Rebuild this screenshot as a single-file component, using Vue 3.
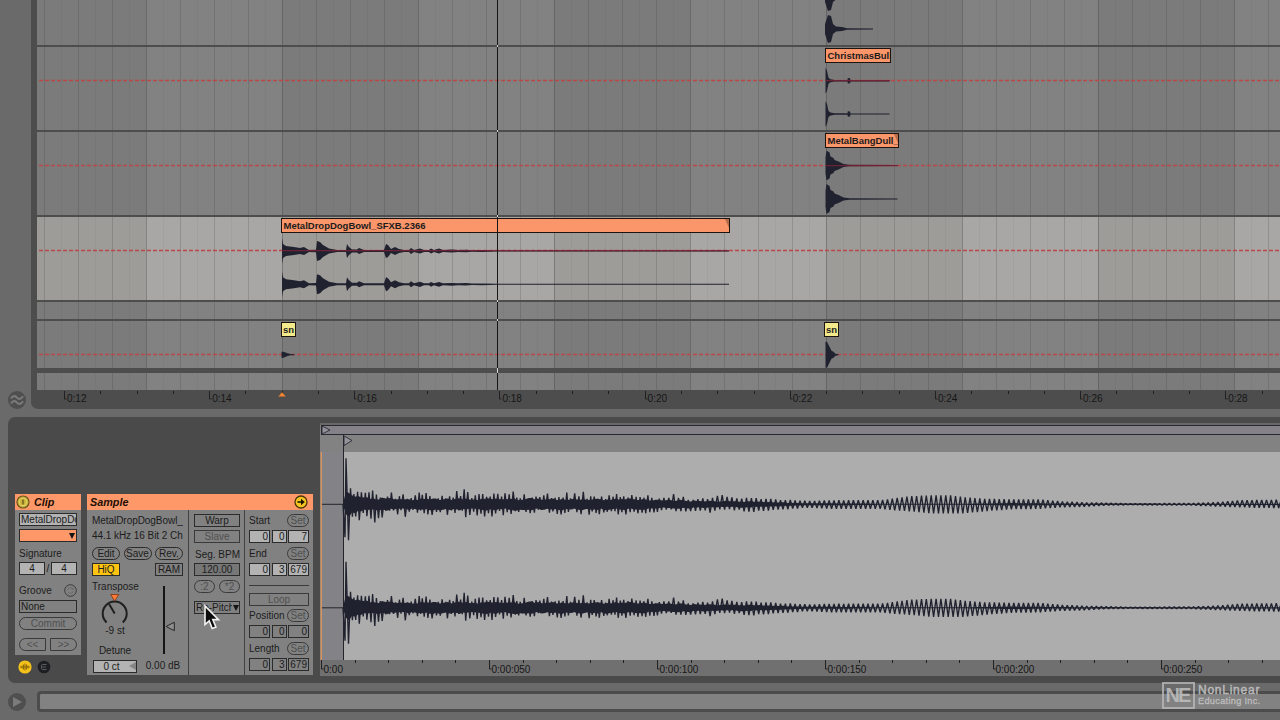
<template>
  <div class="live">
    <section class="arrangement">
      <div class="rail">
        <svg class="follow" width="18" height="18" viewBox="0 0 18 18">
          <circle cx="9" cy="9" r="9" />
          <path d="M3 7.5 C5.5 3.5 7.5 5 9 6.7 S12.5 9 15 5.2 M3 12.5 C5.5 8.5 7.5 10 9 11.7 S12.5 14 15 10.2" />
        </svg>
      </div>
      <div class="timeline">
        <div class="lanes">
          <div class="lane lane-top"></div>
          <div class="lane lane-tall"></div>
          <div class="lane lane-tall"></div>
          <div class="lane lane-tall selected"></div>
          <div class="lane lane-thin"></div>
          <div class="lane lane-short"></div>
          <div class="lane lane-master"></div>

          <svg class="waves" width="1243" height="390" viewBox="37 0 1243 390">
            <line v-for="y in automation" :key="y" class="auto" x1="39" :y1="y" x2="1280" :y2="y" />
            <path v-for="(w, i) in clipWaves" :key="i" class="wave" :d="envelope(w)" />
            <path class="auto-on" d="M282 250.7H729 M826 80.7H890 M826 165.7H898" />
          </svg>

          <div
            v-for="clip in clips"
            :key="clip.x + '-' + clip.y"
            class="clip"
            :class="clip.kind"
            :style="{ left: clip.x - 37 + 'px', top: clip.y + 'px', width: clip.w + 'px' }"
          >
            {{ clip.name }}
          </div>

          <svg class="waves" width="1243" height="390" viewBox="37 0 1243 390">
            <path class="playhead" d="M497.5 0V390" />
            <path class="playhead-gap" d="M497.5 45V47M497.5 130V132M497.5 215V217M497.5 300V302M497.5 319V321M497.5 368V373" />
          </svg>
        </div>
        <svg class="ruler" width="1243" height="19" viewBox="37 390 1243 19">
          <path class="tick" :d="arrangeTicks" />
          <path class="marker" d="M278.3 396.5L282 392.2L285.8 396.5Z" />
          <text v-for="(t, i) in arrangeLabels" :key="t" :x="67 + i * 145.15" y="402">{{ t }}</text>
        </svg>
      </div>
    </section>

    <section class="detail">
      <div class="clip-view">
        <div class="boxes">
          <div class="clip-col">
            <div class="box clip-box">
              <header class="head">
                <svg width="14" height="14" viewBox="0 0 14 14">
                  <circle cx="7" cy="7" r="6" fill="#c9b23c" stroke="#6a561c" stroke-width="1.2" />
                  <circle cx="7" cy="7" r="3.8" fill="none" stroke="#e8d565" />
                  <path d="M7 4.5V9.5" stroke="#7c6821" stroke-width="1.6" />
                </svg>
                <span class="title">Clip</span>
              </header>
              <div class="clip-body">
                <div class="field lit name">MetalDropDogBowl</div>
                <div class="field color-pick"><i class="caret"></i></div>
                <div class="text sig-label">Signature</div>
                <div class="line sig">
                  <div class="field lit num">4</div>
                  <span>/</span>
                  <div class="field lit num">4</div>
                </div>
                <div class="line groove">
                  <span>Groove</span>
                  <svg width="13" height="13" viewBox="0 0 13 13">
                    <circle cx="6.5" cy="6.5" r="5.8" fill="none" stroke="#3b3b3b" />
                    <path d="M3.5 6.2A3 3 0 0 1 9 5M9.5 6.8A3 3 0 0 1 4 8M9.2 3.4V5.3H7.2" fill="none" stroke="#6a6a6a" />
                  </svg>
                </div>
                <div class="field none">None</div>
                <div class="pill dim commit">Commit</div>
                <div class="line nudge">
                  <div class="pill dim half-l">&lt;&lt;</div>
                  <div class="pill dim half-r">&gt;&gt;</div>
                </div>
              </div>
            </div>
            <div class="toggles">
              <svg width="14" height="14" viewBox="0 0 14 14">
                <circle cx="7" cy="7" r="6.6" fill="#f5c21b" />
                <path d="M2 7H12M4 5.5V8.5M5.5 4.5V9.5M7 3.5V10.5M8.5 4.5V9.5M10 5.5V8.5" stroke="#8c6a08" />
              </svg>
              <svg width="14" height="14" viewBox="0 0 14 14">
                <circle cx="7" cy="7" r="6.3" fill="#1d1f22" />
                <path d="M9.5 4.5H5.5Q4.5 4.5 4.5 5.5V8.5Q4.5 9.5 5.5 9.5H9.5M5 7H9" fill="none" stroke="#5b5d61" />
              </svg>
            </div>
          </div>

          <div class="box sample-box">
            <header class="head sample-head">
              <span class="title">Sample</span>
              <svg width="14" height="14" viewBox="0 0 14 14">
                <circle cx="7" cy="7" r="6" fill="#f7c51e" stroke="#4c3708" stroke-width="1.3" />
                <path d="M3.5 7H9" stroke="#1c1405" stroke-width="1.6" />
                <path d="M7 3.8L10.8 7L7 10.2Z" fill="#1c1405" />
              </svg>
            </header>
            <div class="cols">
              <div class="col col-file">
                <div class="text file-name">MetalDropDogBowl_</div>
                <div class="text file-info">44.1 kHz 16 Bit 2 Ch</div>
                <div class="line gap4">
                  <div class="pill">Edit</div>
                  <div class="pill">Save</div>
                  <div class="pill">Rev.</div>
                </div>
                <div class="line gap3">
                  <div class="field hiq">HiQ</div>
                  <div class="field ram">RAM</div>
                </div>
                <div class="tune">
                  <div class="tune-left">
                    <div class="text">Transpose</div>
                    <svg class="knob" width="30" height="31" viewBox="100 593 30 31">
                      <path d="M106.6 622.4A12 12 0 1 1 122.8 622.4" fill="none" stroke="#1f1f1f" stroke-width="2" />
                      <path d="M114.7 613.5L109.2 604.3" stroke="#1f1f1f" stroke-width="2" />
                      <path d="M110.6 594.5H118.8L114.7 601Z" fill="#ff7a35" stroke="#7c3411" stroke-width=".8" />
                    </svg>
                    <div class="text mid">-9 st</div>
                    <div class="text mid detune">Detune</div>
                    <div class="field lit ct">0 ct<i></i></div>
                  </div>
                  <div class="tune-right">
                    <svg width="16" height="72" viewBox="161 583 16 72">
                      <path d="M164 586V654" stroke="#151515" stroke-width="2" />
                      <path d="M166 626.5L174.3 622.3V630.7Z" fill="#8f8f8f" stroke="#242424" />
                    </svg>
                    <div class="text db">0.00 dB</div>
                  </div>
                </div>
              </div>

              <div class="col col-warp">
                <div class="field">Warp</div>
                <div class="field dim gap3">Slave</div>
                <div class="text gap5">Seg. BPM</div>
                <div class="field bpm gap2">120.00</div>
                <div class="line gap4">
                  <div class="pill dim">:2</div>
                  <div class="pill dim">*2</div>
                </div>
                <div class="field mode"><span>Re-Pitch</span><i class="caret"></i></div>
              </div>

              <div class="col col-range">
                <template v-for="(r, i) in ranges" :key="r.label">
                  <div v-if="i === 2" class="rule"></div>
                  <div v-if="i === 2" class="field dim loop">Loop</div>
                  <div class="line" :class="{ gap4: i > 0 && i !== 2, gap3: i === 2 }">
                    <span>{{ r.label }}</span>
                    <div class="pill dim set">Set</div>
                  </div>
                  <div class="line values">
                    <div
                      v-for="(n, k) in r.values"
                      :key="k"
                      class="field value"
                      :class="{ lit: r.lit, mini: k === 1 }"
                    >{{ n }}</div>
                  </div>
                </template>
              </div>
            </div>
          </div>
        </div>

        <svg class="editor" width="960" height="253" viewBox="320 423 960 253">
          <rect x="320" y="423" width="960" height="253" fill="#828282" />
          <rect x="320" y="423" width="960" height="2" fill="#686868" />
          <rect x="321.5" y="425.5" width="970" height="9" fill="#848189" stroke="#292934" />
          <rect x="322" y="452" width="21" height="208" fill="#838286" />
          <rect x="344" y="452" width="936" height="208" fill="#adadad" />
          <rect x="320" y="660" width="960" height="16" fill="#707070" />
          <rect x="320.6" y="452" width="1.4" height="208" fill="#d8935f" />
          <path d="M343.5 435V660" stroke="#24242c" />
          <path d="M322 426L330 430L322 434Z M344 436L352 440.5L344 445.5Z" fill="#94929a" stroke="#292934" stroke-width=".9" />
          <g v-for="y in [504.3, 607.8]" :key="y" :transform="`translate(0 ${y})`">
            <path d="M322 0H344" stroke="#24242c" />
            <path class="wave" :d="corePath" />
            <path class="spikes" :d="spikePath" />
          </g>
          <path class="tick" :d="sampleTicks" />
          <text v-for="(t, i) in sampleLabels" :key="t" :x="323.5 + i * 168" y="673">{{ t }}</text>
        </svg>
      </div>
    </section>

    <footer class="status">
      <svg width="18" height="18" viewBox="0 0 18 18">
        <circle cx="9" cy="9" r="9" fill="#4f4f4f" />
        <path d="M5 4L14 9L5 14Z" fill="#7b7b7b" />
      </svg>
      <div class="status-bar"></div>
    </footer>

    <svg class="pointer" width="18" height="28" viewBox="0 0 18 28">
      <path d="M2 2V20.5L6.2 16.8L9.2 24.5L12.9 23L9.8 15.6H15.5Z" />
    </svg>

    <div class="brand">
      <div class="brand-mark">NE</div>
      <div class="brand-text">
        <b>NonLinear</b>
        <small>Educating Inc.</small>
      </div>
    </div>
  </div>
</template>

<script setup>
const automation = [80.5, 165.5, 250.5, 354.5]

const clips = [
  { x: 825, y: 48, w: 66, name: 'ChristmasBull', kind: 'orange' },
  { x: 825, y: 133, w: 74, name: 'MetalBangDull_', kind: 'orange folded' },
  { x: 281, y: 218, w: 449, name: 'MetalDropDogBowl_SFXB.2366', kind: 'orange folded' },
  { x: 281, y: 322, w: 15, name: 'sn', kind: 'yellow' },
  { x: 824, y: 322, w: 15, name: 'sn', kind: 'yellow' },
]

// [offset, half height] pairs along each clip
const bowl = [
  [0, 13], [1, 7], [4, 5], [12, 4], [18, 3], [22, 4], [27, 1], [34, 1.3], [35, 10], [38, 9], [41, 6], [47, 2.5],
  [55, 1], [64, 1], [65, 7], [67, 4], [70, 1.5], [75, 1.5], [77, 3], [82, 1], [92, 1], [102, 1], [104, 7], [106, 6],
  [109, 2], [113, 4], [117, 2], [122, 1], [127, 1], [129, 3], [132, 1], [138, 2.6], [142, 1], [147, 1], [149, 2.4],
  [152, 1], [157, 2.4], [161, 1], [170, 1.4], [176, 1], [184, 1.2], [190, 0.7], [200, 0.9], [215, 0.5], [447, 0.5],
]
const bulb = [[0, 13], [1.5, 10], [3, 3], [5, 1.5], [9, 0.7], [22, 0.7], [22.3, 2.8], [24.5, 2.5], [25, 0.6], [64, 0.6]]
const bang = [
  [0, 8], [1, 15], [4, 13], [5, 9], [8, 7.5], [9, 5.5], [13, 4], [18, 1.5], [24, 0.7], [72, 0.6],
]
const hit = [[0, 5], [1, 8], [3, 14], [6, 13], [8, 5], [11, 2.5], [17, 2], [22, 0.8], [48, 0.6]]

const clipWaves = [
  { x: 825, y: -3, pts: hit },
  { x: 825, y: 29, pts: hit },
  { x: 825.5, y: 80.8, pts: bulb },
  { x: 825.5, y: 114, pts: bulb },
  { x: 825.5, y: 165.5, pts: bang },
  { x: 825.5, y: 199, pts: bang },
  { x: 282, y: 251, pts: bowl },
  { x: 282, y: 284.3, pts: bowl },
  { x: 281.5, y: 354.7, pts: [[0, 3], [2, 3], [6, 1.4], [9, 0.6], [13, 0.5]] },
  { x: 825.5, y: 354.7, pts: [[0, 13], [1.5, 13], [4, 8], [6, 4], [8, 3], [10, 1], [13, 0.5]] },
]

function envelope({ x, y, pts }) {
  const top = pts.map(([dx, h]) => `${x + dx} ${y - h}`)
  const bottom = [...pts].reverse().map(([dx, h]) => `${x + dx} ${y + h}`)
  return `M${top.join('L')}L${bottom.join('L')}Z`
}

const arrangeLabels = ['0:12', '0:14', '0:16', '0:18', '0:20', '0:22', '0:24', '0:26', '0:28']
const sampleLabels = ['0:00', '0:00:050', '0:00:100', '0:00:150', '0:00:200', '0:00:250']

function ticks(start, step, every, count, y, long) {
  let d = ''
  for (let i = 0; i < count; i++) {
    const x = Math.round(start + i * step) + 0.5
    d += i % every === 0 ? `M${x} ${y}V${y + long}H${x + 2}` : `M${x} ${y}V${y + 3}`
  }
  return d
}
const arrangeTicks = ticks(64, 36.29, 4, 34, 391, 8)
const sampleTicks = ticks(321, 33.6, 5, 29, 660, 9)

// x, peak height, trough depth, solid core
const shape = [
  [343, 1, 1, 1], [346, 46, 36, 12], [348.5, 24, 36, 12], [351, 14, 17, 8], [353, 21, 14, 8], [358, 17, 20, 7],
  [363, 11, 13, 6], [368, 19, 14, 6], [372, 17, 22, 6], [378, 14, 14, 5.5], [392, 13, 14, 5], [410, 12, 12, 4.5],
  [440, 12, 11, 5], [464, 15, 13, 5], [490, 14, 13, 5], [512, 13, 13, 5], [530, 10, 10, 5], [574, 14, 11, 5],
  [600, 10, 10, 4.8], [630, 12, 11, 5], [650, 9, 11, 4.5], [660, 7, 7, 3.5], [675, 11, 8, 4], [690, 6, 7, 3.5],
  [708, 6, 9, 3], [722, 10, 6, 3], [740, 7, 7, 3], [760, 6, 8, 2.5], [775, 5, 6.5, 2], [790, 4.5, 5, 1.5],
  [805, 3.5, 3.5, 1], [830, 4, 4.5, 1], [860, 4, 4.5, 0.8], [880, 4, 4.5, 0.5], [895, 6, 6, 0.5], [910, 8, 7, 0.5],
  [930, 9, 9, 0.5], [950, 9, 9, 0.5], [965, 7, 9, 0.5], [985, 5.5, 7, 0.8], [1010, 5, 5, 1.2], [1040, 5, 4.5, 1],
  [1060, 3, 3, 0.7], [1080, 2, 2.5, 0.6], [1105, 1.4, 1.2, 0.7], [1130, 0.7, 0.7, 0.7], [1190, 1, 1, 0.6],
  [1215, 2, 2, 0.6], [1240, 4, 3, 0.6], [1260, 4.3, 3.5, 0.6], [1290, 4.6, 4, 0.6],
]

function at(x, k) {
  let i = 1
  while (i < shape.length - 1 && shape[i][0] < x) i++
  const a = shape[i - 1]
  const b = shape[i]
  const t = Math.min(1, Math.max(0, (x - a[0]) / (b[0] - a[0])))
  return a[k] + (b[k] - a[k]) * t
}

let seed = 11
function rand() {
  seed = (seed * 16807) % 2147483647
  return seed / 2147483647
}

function buildSpikes() {
  let d = 'M343 0L345 33L346 -46L348.5 36'
  let up = true
  let x = 350.5
  while (x < 1284) {
    const noisy = Math.max(0, Math.min(1, (850 - x) / 250))
    const f = 1 - noisy * 0.58 * rand()
    d += `L${x.toFixed(1)} ${(up ? -at(x, 1) * f : at(x, 2) * f).toFixed(1)}`
    up = !up
    x += x < 660 ? 1.5 + rand() * 0.8 : 2.43
  }
  return d
}
const spikePath = buildSpikes()

function buildCore() {
  const xs = []
  for (let x = 343; x <= 1283; x += 3) xs.push(x)
  const edge = (x) => at(x, 3) * (x < 790 ? 0.8 + rand() * 0.45 : 1)
  const top = xs.map((x) => `${x} ${-edge(x).toFixed(1)}`)
  const bottom = xs.reverse().map((x) => `${x} ${edge(x).toFixed(1)}`)
  return `M${top.join('L')}L${bottom.join('L')}Z`
}
const corePath = buildCore()

const ranges = [
  { label: 'Start', values: [0, 0, 7], lit: true },
  { label: 'End', values: [0, 3, 679], lit: true },
  { label: 'Position', values: [0, 0, 0], lit: false },
  { label: 'Length', values: [0, 3, 679], lit: false },
]
</script>

<style>
body {
  background: #6a6a6a;
  overflow: hidden;
}
</style>

<style scoped>
.live {
  position: relative;
  width: 1280px;
  height: 720px;
  overflow: hidden;
  display: flex;
  flex-direction: column;
  background: #6a6a6a;
  font-family: 'Liberation Sans', Arial, sans-serif;
  font-size: 10px;
  color: #1c1c1c;
  cursor: default;
}

svg {
  display: block;
  flex-shrink: 0;
}

/* arrangement */
.arrangement {
  display: flex;
  height: 409px;
}

.rail {
  width: 31px;
  display: flex;
  align-items: flex-end;
}

.follow {
  margin-left: 8px;
}

.follow circle {
  fill: #4f4f4f;
}

.follow path {
  fill: none;
  stroke: #7c7c7c;
  stroke-width: 2;
}

.timeline {
  flex: 1;
  padding-left: 6px;
  background: #4d4d4d;
  border-bottom-left-radius: 7px;
}

.lanes {
  position: relative;
  height: 390px;
  display: flex;
  flex-direction: column;
  overflow: hidden;
}

.lane {
  margin-bottom: 2px;
  flex-shrink: 0;
  background-color: #7b7b7b;
  background-image:
    repeating-linear-gradient(90deg, rgba(0, 0, 0, 0.08) 0 1px, transparent 1px 136px),
    repeating-linear-gradient(90deg, rgba(0, 0, 0, 0.08) 0 1px, transparent 1px 34px),
    repeating-linear-gradient(90deg, rgba(0, 0, 0, 0.04) 0 1px, transparent 1px 17px),
    repeating-linear-gradient(90deg, transparent 0 136px, rgba(255, 255, 255, 0.05) 136px 272px);
  background-size: 1632px 100%;
  background-position-x: -27px;
}

.lane-top {
  height: 45px;
}

.lane-tall {
  height: 83px;
}

.lane-thin {
  height: 17px;
}

.lane-short {
  height: 47px;
  margin-bottom: 5px;
}

.lane-master {
  height: 17px;
  margin-bottom: 0;
}

.selected {
  background-color: #9d9c98;
  background-image:
    repeating-linear-gradient(90deg, rgba(0, 0, 0, 0.1) 0 1px, transparent 1px 136px),
    repeating-linear-gradient(90deg, rgba(0, 0, 0, 0.1) 0 1px, transparent 1px 34px),
    repeating-linear-gradient(90deg, rgba(0, 0, 0, 0.04) 0 1px, transparent 1px 17px),
    repeating-linear-gradient(90deg, transparent 0 136px, #a8a7a5 136px 272px);
}

.waves {
  position: absolute;
  left: 0;
  top: 0;
}

.auto {
  stroke: #b94848;
  stroke-width: 1.4;
  stroke-dasharray: 4 2;
}

.auto-on {
  fill: none;
  stroke: #7e2338;
  stroke-width: 1;
}

.wave {
  fill: #20222f;
}

.spikes {
  fill: none;
  stroke: #20222f;
  stroke-width: 1.35;
  stroke-linejoin: bevel;
}

.playhead {
  stroke: #161616;
}

.playhead-gap {
  stroke: #d8d8d8;
}

.clip {
  position: absolute;
  box-sizing: border-box;
  height: 15px;
  padding-left: 1.5px;
  border: 1.5px solid #1d140f;
  overflow: hidden;
  white-space: nowrap;
  font-size: 9.5px;
  font-weight: bold;
  line-height: 13.5px;
}

.clip.orange {
  background: #fb966a;
}

.clip.folded::after {
  content: '';
  position: absolute;
  right: 0;
  top: 0;
  border-top: 9px solid #b56d4c;
  border-left: 4px solid transparent;
}

.clip.yellow {
  background: #f3ea8b;
  padding-left: 1px;
}

.tick {
  fill: none;
  stroke: #212121;
}

.ruler text,
.editor text {
  font-size: 10px;
  fill: #161616;
}

.marker {
  fill: #f58430;
}

/* detail view */
.detail {
  margin: 8px 0 0 8px;
  height: 266px;
  background: #4a4a4a;
  border-radius: 7px 0 0 7px;
}

.clip-view {
  display: flex;
  justify-content: space-between;
  padding: 6px 0 0 7px;
}

.boxes {
  display: flex;
  gap: 6px;
  padding-top: 71px;
}

.box {
  background: #818181;
}

.clip-box {
  width: 66px;
  height: 161px;
}

.head {
  height: 16px;
  display: flex;
  align-items: center;
  gap: 4px;
  padding-left: 1px;
  background: #ff9868;
}

.title {
  font-size: 10.8px;
  font-weight: bold;
  font-style: italic;
  color: #1d0e06;
}

.sample-head {
  justify-content: space-between;
  padding: 0 5px 0 3px;
}

.clip-body {
  padding: 3px 4px 0;
  display: flex;
  flex-direction: column;
}

.field,
.pill {
  box-sizing: border-box;
  height: 13px;
  border: 1px solid #2b2b2b;
  line-height: 11.5px;
  text-align: center;
  white-space: nowrap;
  overflow: hidden;
}

.pill {
  border-radius: 7px;
}

.lit {
  background: #b3b3b3;
}

.dim {
  color: #505050;
  border-color: #3a3a3a;
}

.text {
  height: 13px;
  line-height: 13px;
  white-space: nowrap;
}

.line {
  height: 13px;
  display: flex;
  justify-content: space-between;
  align-items: center;
}

.caret {
  border-top: 6px solid #141414;
  border-left: 3.5px solid transparent;
  border-right: 3.5px solid transparent;
}

.gap2 {
  margin-top: 2px;
}

.gap3 {
  margin-top: 3px;
}

.gap4 {
  margin-top: 4px;
}

.gap5 {
  margin-top: 5px;
}

.name {
  text-align: left;
  padding-left: 1px;
}

.color-pick {
  margin-top: 3px;
  display: flex;
  justify-content: flex-end;
  align-items: center;
  padding-right: 1px;
  background: #ff9868;
}

.sig-label {
  margin-top: 5px;
}

.sig {
  margin-top: 2px;
}

.num {
  width: 26px;
}

.groove {
  margin-top: 9px;
}

.none {
  margin-top: 3px;
  text-align: left;
  padding-left: 1px;
}

.commit {
  margin-top: 4px;
}

.nudge {
  margin-top: 8px;
}

.half-l,
.half-r {
  width: 27px;
}

.half-l {
  border-radius: 7px 0 0 7px;
}

.half-r {
  border-radius: 0 7px 7px 0;
}

.toggles {
  display: flex;
  gap: 5px;
  padding: 5px 0 0 3px;
}

.sample-box {
  width: 226px;
  height: 181px;
}

.cols {
  display: flex;
  height: 165px;
}

.col {
  box-sizing: border-box;
  padding-top: 4px;
  display: flex;
  flex-direction: column;
}

.col-file {
  width: 102px;
  padding-left: 5px;
  padding-right: 5px;
  border-right: 1px solid #404040;
}

.file-name,
.file-info {
  letter-spacing: -0.05px;
}

.file-info {
  height: 12px;
  margin-top: 3px;
  padding-bottom: 1px;
  line-height: 12px;
}

.col-file .pill,
.hiq,
.ram {
  width: 28px;
}

.hiq {
  background: #ffc312;
}

.tune {
  display: flex;
  justify-content: space-between;
  margin-top: 4px;
}

.tune-left {
  width: 46px;
}

.knob {
  margin-left: 8px;
}

.mid {
  text-align: center;
}

.detune {
  margin-top: 7px;
}

.ct {
  position: relative;
  width: 44px;
  margin: 3px 0 0 1px;
  padding-right: 7px;
}

.ct i {
  position: absolute;
  right: 0;
  top: 1px;
  border-right: 7px solid #858585;
  border-top: 4.5px solid transparent;
  border-bottom: 4.5px solid transparent;
}

.tune-right {
  width: 40px;
  display: flex;
  flex-direction: column;
  align-items: center;
  padding-top: 3px;
}

.tune-right svg {
  margin-left: 12px;
}

.db {
  margin: 4px 0 0 0;
}

.col-warp {
  width: 56px;
  padding-left: 5px;
  padding-right: 4px;
  border-right: 1px solid #404040;
}

.col-warp .text {
  padding-left: 1px;
}

.col-warp .pill {
  width: 21px;
}

.bpm {
  background: #777;
}

.mode {
  display: flex;
  justify-content: space-between;
  align-items: center;
  margin-top: 8px;
  padding-left: 1px;
}

.mode span {
  width: 36px;
  overflow: hidden;
  text-align: left;
}

.mode .caret {
  flex-shrink: 0;
}

.col-range {
  flex: 1;
  padding-left: 4px;
  padding-right: 4px;
}

.set {
  width: 22px;
}

.values {
  margin-top: 3px;
}

.value {
  width: 21px;
  text-align: right;
  padding-right: 1px;
}

.mini {
  width: 15px;
}

.rule {
  height: 1px;
  margin: 9px 0 7px;
  background: #3a3a3a;
}

/* bottom bar */
.status {
  display: flex;
  align-items: center;
  gap: 11px;
  height: 37px;
  padding-left: 8px;
}

.status-bar {
  flex: 1;
  height: 15px;
  border: 3px solid #4c4c4c;
  border-right: 0;
  border-radius: 4px 0 0 4px;
  background: #828282;
}

.pointer {
  position: absolute;
  left: 203px;
  top: 604px;
}

.pointer path {
  fill: #0c0c0c;
  stroke: #f2f2f2;
  stroke-width: 1.6;
}

.brand {
  position: absolute;
  left: 1162px;
  top: 682px;
  display: flex;
  gap: 3px;
  color: rgba(190, 190, 190, 0.9);
}

.brand-mark {
  box-sizing: border-box;
  width: 33px;
  height: 27px;
  border: 2.5px solid rgba(185, 185, 185, 0.8);
  font-size: 20px;
  font-weight: bold;
  line-height: 22px;
  text-align: center;
  letter-spacing: -2px;
  text-indent: -2px;
}

.brand-text {
  display: flex;
  flex-direction: column;
}

.brand-text b {
  font-size: 12px;
  line-height: 13px;
  margin-top: 2px;
  letter-spacing: 0.75px;
  font-weight: normal;
  -webkit-text-stroke: 0.5px;
}

.brand-text small {
  font-size: 9.2px;
  line-height: 9px;
  letter-spacing: 0.3px;
  -webkit-text-stroke: 0.4px;
}
</style>
